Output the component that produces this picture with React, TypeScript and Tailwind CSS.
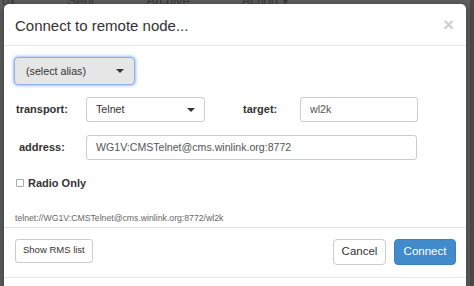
import React from 'react';

const Caret = () => (
    <span className="inline-block w-0 h-0 border-l-[4px] border-r-[4px] border-t-[4px] border-l-transparent border-r-transparent border-t-[#333]" />
);

const App: React.FC = () => {
    return (
        <div className="relative w-[474px] h-[286px] overflow-hidden bg-[#5e5e5e] font-['Liberation_Sans',Arial,sans-serif] text-[#333]">
            {/* app behind the overlay */}
            <div className="absolute top-[-9px] left-[2px] flex gap-[52px] text-[13px] text-[#3a3a3a]">
                <span>ox</span>
                <span>Sent</span>
                <span>Archive</span>
                <span>Action ▾</span>
            </div>
            <div className="absolute right-0 top-0 w-[4px] h-full bg-[#4a4a4a]" />

            <div className="relative z-10 ml-[4px] mt-[4px] w-[462px] h-[300px] bg-white rounded-t-[5px] shadow-[0_2px_8px_rgba(0,0,0,0.4)]">
                <div className="h-[42px] flex items-center justify-between pl-[11px] pr-[12px] border-b border-[#e5e5e5]">
                    <h4 className="text-[15px] leading-none text-[#333] mt-[2px]">Connect to remote node...</h4>
                    <span className="text-[19px] font-bold text-[#cfcfcf] leading-none mt-[-1px]">×</span>
                </div>

                <div className="pl-[10px] pr-[14px] pt-[11px]">
                    <button className="w-[121px] h-[28px] flex items-center justify-between pl-[11px] pr-[10px] bg-[#e6e6e6] border border-[#8fb0e0] rounded-[4px] shadow-[0_0_3px_1px_rgba(102,150,230,0.6)] text-[10.7px] text-[#333]">
                        <span>(select alias)</span>
                        <Caret />
                    </button>

                    <div className="mt-[12px] flex items-center h-[25px]">
                        <label className="w-[72px] pl-[2px] text-[11px] font-bold">transport:</label>
                        <div className="w-[119px] h-[25px] flex items-center justify-between pl-[9px] pr-[9px] border border-[#ccc] rounded-[3px] text-[10.7px]">
                            <span>Telnet</span>
                            <Caret />
                        </div>
                        <label className="ml-[38px] w-[57px] text-[11px] font-bold">target:</label>
                        <div className="w-[118px] h-[25px] flex items-center pl-[9px] border border-[#ccc] rounded-[3px] text-[10.7px] text-[#555]">
                            wl2k
                        </div>
                    </div>

                    <div className="mt-[13px] flex items-center h-[25px]">
                        <label className="w-[72px] pl-[5px] text-[11px] font-bold">address:</label>
                        <div className="w-[331px] h-[25px] flex items-center pl-[9px] border border-[#ccc] rounded-[3px] text-[10.6px] text-[#555]">
                            WG1V:CMSTelnet@cms.winlink.org:8772
                        </div>
                    </div>

                    <div className="mt-[15px] flex items-start gap-[4px] pl-[2px]">
                        <span className="mt-[4px] w-[8px] h-[8px] border border-[#aaa] rounded-[1px] bg-white" />
                        <span className="text-[11px] font-bold">Radio Only</span>
                    </div>

                    <div className="mt-[20px] pl-[1px] text-[8.7px] text-[#666]">
                        telnet://WG1V:CMSTelnet@cms.winlink.org:8772/wl2k
                    </div>
                </div>

                <div className="mt-[2px] border-t border-[#e5e5e5] h-[50px] flex items-center justify-between pl-[11px] pr-[10px]">
                    <button className="h-[24px] mt-[-3px] px-[7px] border border-[#ccc] rounded-[3px] bg-white text-[9.5px] text-[#333]">
                        Show RMS list
                    </button>
                    <div className="flex gap-[8px]">
                        <button className="h-[26px] w-[53px] border border-[#ccc] rounded-[4px] bg-white text-[11.5px] text-[#333]">
                            Cancel
                        </button>
                        <button className="h-[26px] w-[62px] border border-[#3d82c0] rounded-[4px] bg-[#428bca] text-[11.5px] text-white">
                            Connect
                        </button>
                    </div>
                </div>
                <div className="border-t border-[#e5e5e5]" />
            </div>
        </div>
    );
};

export default App;
